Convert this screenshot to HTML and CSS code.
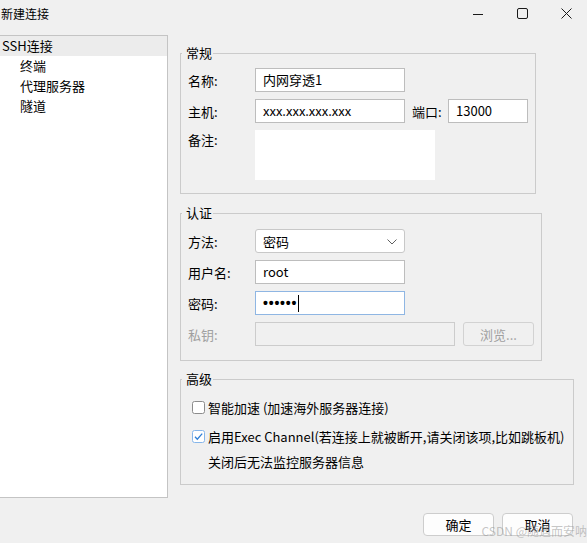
FILE: index.html
```html
<!DOCTYPE html>
<html lang="zh-CN">
<head>
<meta charset="utf-8">
<title>新建连接</title>
<link rel="stylesheet" href="styles.css">
</head>
<body>
<div class="window">
  <div class="titlebar">
    <span class="title">新建连接</span>
    <div class="controls">
      <span class="ctl"><svg width="10" height="10" viewBox="0 0 10 10"><path d="M0 5.5H10" stroke="#1a1a1a" stroke-width="1"/></svg></span>
      <span class="ctl"><svg width="11" height="11" viewBox="0 0 11 11"><rect x="0.5" y="0.5" width="10" height="10" rx="1.5" fill="none" stroke="#1a1a1a" stroke-width="1"/></svg></span>
      <span class="ctl"><svg width="11" height="11" viewBox="0 0 11 11"><path d="M0.5 0.5L10.5 10.5M10.5 0.5L0.5 10.5" stroke="#1a1a1a" stroke-width="1"/></svg></span>
    </div>
  </div>

  <div class="main">
    <div class="tree">
      <div class="node selected">SSH连接</div>
      <div class="node child">终端</div>
      <div class="node child">代理服务器</div>
      <div class="node child">隧道</div>
    </div>

    <div class="content">
      <fieldset class="group g1">
        <legend>常规</legend>
        <div class="rows">
          <div class="row">
            <span class="lbl">名称:</span>
            <div class="input w150">内网穿透1</div>
          </div>
          <div class="row">
            <span class="lbl">主机:</span>
            <div class="input w150">xxx.xxx.xxx.xxx</div>
            <span class="port-lbl">端口:</span>
            <div class="input w80">13000</div>
          </div>
          <div class="row top">
            <span class="lbl">备注:</span>
            <div class="textarea"></div>
          </div>
        </div>
      </fieldset>

      <fieldset class="group g2">
        <legend>认证</legend>
        <div class="rows">
          <div class="row">
            <span class="lbl">方法:</span>
            <div class="combo w150">
              <span>密码</span>
              <svg class="chev" width="10" height="6" viewBox="0 0 10 6"><path d="M0.5 0.5L5 5L9.5 0.5" fill="none" stroke="#606060" stroke-width="1"/></svg>
            </div>
          </div>
          <div class="row">
            <span class="lbl">用户名:</span>
            <div class="input w150">root</div>
          </div>
          <div class="row">
            <span class="lbl">密码:</span>
            <div class="input w150 focused"><span class="dots">••••••</span><span class="caret"></span></div>
          </div>
          <div class="row">
            <span class="lbl disabled">私钥:</span>
            <div class="input w200 dis"></div>
            <div class="btn-browse">浏览...</div>
          </div>
        </div>
      </fieldset>

      <fieldset class="group g3">
        <legend>高级</legend>
        <div class="rows adv">
          <div class="check-row">
            <svg class="cb" width="13" height="13" viewBox="0 0 13 13"><rect x="0.5" y="0.5" width="12" height="12" rx="2" fill="#fff" stroke="#8c8c8c"/></svg>
            <span>智能加速 (加速海外服务器连接)</span>
          </div>
          <div class="check-row r2">
            <svg class="cb" width="13" height="13" viewBox="0 0 13 13"><rect x="0.5" y="0.5" width="12" height="12" rx="2" fill="#fff" stroke="#86b6ea"/><path d="M3 6.8L5.3 9.2L10.2 3.6" fill="none" stroke="#2f7fd6" stroke-width="1.3"/></svg>
            <span>启用Exec Channel(若连接上就被断开,请关闭该项,比如跳板机)</span>
          </div>
          <div class="note">关闭后无法监控服务器信息</div>
        </div>
      </fieldset>
    </div>
  </div>

  <div class="buttons">
    <div class="btn">确定</div>
    <div class="btn">取消</div>
  </div>

  <div class="watermark">CSDN @随遇而安呐</div>
</div>
</body>
</html>
```

FILE: styles.css
```css
html, body {
  margin: 0;
  padding: 0;
}

body {
  background: #f0f0f0;
  font-family: "Noto Sans CJK SC", "Noto Sans", sans-serif;
  font-size: 13px;
  color: #000;
}

.window {
  position: relative;
  width: 587px;
  height: 543px;
  overflow: hidden;
  background: #f0f0f0;
}

/* title bar */
.titlebar {
  height: 28px;
  display: flex;
  align-items: center;
  justify-content: space-between;
}

.title {
  font-size: 12px;
  line-height: 16px;
  padding-left: 1px;
  color: #000;
}

.controls {
  display: flex;
  margin-right: -1px;
  align-self: flex-start;
  height: 27px;
}

.ctl {
  width: 44px;
  display: flex;
  align-items: center;
  justify-content: center;
}

/* main area */
.main {
  margin-top: 7px;
  display: flex;
  align-items: flex-start;
}

.tree {
  box-sizing: border-box;
  width: 168px;
  height: 463px;
  background: #fff;
  border-top: 1px solid #c4c4c4;
  border-right: 1px solid #c4c4c4;
  border-bottom: 1px solid #c4c4c4;
}

.node {
  height: 20px;
  line-height: 20px;
  padding-left: 2px;
  white-space: nowrap;
}

.node.selected {
  background: #ececec;
}

.node.child {
  padding-left: 20px;
}

.content {
  margin-left: 12px;
  padding-top: 9px;
  display: flex;
  flex-direction: column;
}

/* group boxes */
.group {
  box-sizing: border-box;
  margin: 0;
  padding: 0;
  border: 1px solid #cbcbcb;
  min-width: 0;
}

.group legend {
  font-size: 13px;
  line-height: 18px;
  padding: 0 1px 0 4px;
  margin-left: 1px;
}

.g1 {
  width: 356px;
  padding: 6px 0 13px 0;
}

.g2 {
  width: 362px;
  margin-top: 10px;
  padding: 7px 0 14px 0;
}

.g3 {
  width: 394px;
  margin-top: 9px;
  padding: 10px 0 13px 0;
}

.rows {
  display: flex;
  flex-direction: column;
  gap: 7px;
  padding-left: 7px;
}

.row {
  display: flex;
  align-items: center;
  height: 24px;
}

.row.top {
  align-items: flex-start;
  height: auto;
}

.row.top .lbl {
  line-height: 20px;
}

.lbl {
  width: 67px;
  flex: none;
  white-space: nowrap;
}

.lbl.disabled {
  color: #a0a0a0;
}

.port-lbl {
  width: 36px;
  margin-left: 7px;
  white-space: nowrap;
}

.input {
  box-sizing: border-box;
  height: 24px;
  line-height: 22px;
  border: 1px solid #bdbdbd;
  background: #fff;
  padding-left: 7px;
  white-space: nowrap;
  display: flex;
  align-items: center;
}

.w150 { width: 150px; }
.w80 { width: 80px; }
.w200 { width: 200px; }

.input.focused {
  border-color: #8fb6e3;
}

.input.dis {
  background: #f0f0f0;
  border-color: #cccccc;
}

.dots {
  font-family: "Liberation Sans", sans-serif;
  font-size: 14px;
  letter-spacing: 0.8px;
  font-weight: bold;
  line-height: 22px;
}

.caret {
  display: inline-block;
  width: 1px;
  height: 17px;
  background: #000;
  margin-left: 1px;
}

.textarea {
  width: 180px;
  height: 50px;
  background: #fff;
}

.combo {
  box-sizing: border-box;
  height: 24px;
  border: 1px solid #c8c8c8;
  border-radius: 3px;
  background: #fff;
  display: flex;
  align-items: center;
  justify-content: space-between;
  padding: 0 7px 0 7px;
}

.chev {
  display: block;
  margin-top: 1px;
}

.btn-browse {
  box-sizing: border-box;
  width: 71px;
  height: 24px;
  margin-left: 8px;
  border: 1px solid #d2d2d2;
  border-radius: 3px;
  background: #f0f0f0;
  color: #a0a0a0;
  display: flex;
  align-items: center;
  justify-content: center;
}

/* advanced */
.rows.adv {
  gap: 0;
  padding-left: 11px;
}

.check-row {
  display: flex;
  align-items: center;
  height: 18px;
  white-space: nowrap;
}

.check-row.r2 {
  margin-top: 11px;
}

.cb {
  display: block;
  flex: none;
  margin-right: 3px;
}

.note {
  height: 18px;
  line-height: 18px;
  margin-top: 8px;
  padding-left: 16px;
  white-space: nowrap;
}

/* buttons */
.buttons {
  margin-top: 15px;
  display: flex;
  justify-content: flex-end;
  gap: 8px;
  padding-right: 14px;
}

.btn {
  box-sizing: border-box;
  width: 71px;
  height: 23px;
  border: 1px solid #cdcdcd;
  border-radius: 4px;
  background: #fdfdfd;
  display: flex;
  align-items: center;
  justify-content: center;
}

.watermark {
  position: absolute;
  right: 0;
  bottom: 4px;
  font-size: 12px;
  line-height: 16px;
  color: rgba(150, 150, 150, 0.55);
  white-space: nowrap;
}
```
